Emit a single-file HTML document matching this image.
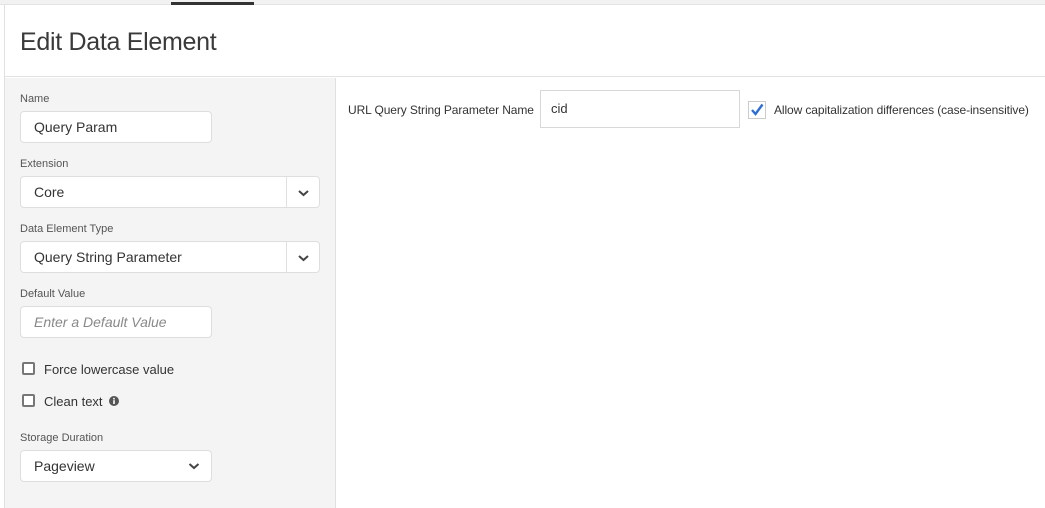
<!DOCTYPE html>
<html><head><meta charset="utf-8"><style>
*{box-sizing:border-box;margin:0;padding:0}
body{width:1045px;height:508px;overflow:hidden;background:#fff;font-family:"Liberation Sans",sans-serif;color:#333;position:relative}
.abs{position:absolute}
.top{left:0;top:0;width:1045px;height:5px;background:#f2f2f2;border-bottom:1px solid #e4e4e4}
.tab{left:171px;top:2px;width:83px;height:3px;background:#333}
.lb{left:4px;top:5px;width:1px;height:503px;background:#e0e0e0}
.hdr{left:5px;top:5px;width:1040px;height:72px;border-bottom:1px solid #e2e2e2}
h1{position:absolute;font-weight:normal;font-size:25px;color:#3a3a3a;letter-spacing:-0.3px}
.side{left:5px;top:78px;width:331px;height:430px;background:#f4f4f4;border-right:1px solid #e0e0e0}
.lbl{font-size:11px;color:#555}
.inp{background:#fff;border:1px solid #dedede;border-radius:4px;height:32px;font-size:14px;padding-left:13px;line-height:30px;color:#333}
.inp .btn{position:absolute;right:0;top:0;width:33px;height:30px;border-left:1px solid #e0e0e0}
.cb{width:13px;height:13px;border:2px solid #777;border-radius:2px;background:#fff}
.ct{font-size:13px;color:#333}
</style></head><body>
<div class="abs top"></div><div class="abs tab"></div>
<div class="abs lb"></div>
<div class="abs hdr"><h1 style="left:15px;top:23px">Edit Data Element</h1></div>
<div class="abs side"></div>
<div class="abs lbl" style="left:20px;top:93px">Name</div>
<div class="abs inp" style="left:20px;top:111px;width:192px">Query Param</div>
<div class="abs lbl" style="left:20px;top:158px">Extension</div>
<div class="abs inp" style="left:20px;top:176px;width:300px">Core<div class="btn"><svg width="33" height="30" viewBox="0 0 33 30"><path d="M12 14l4.5 4 4.5-4" fill="none" stroke="#444" stroke-width="2"/></svg></div></div>
<div class="abs lbl" style="left:20px;top:223px">Data Element Type</div>
<div class="abs inp" style="left:20px;top:241px;width:300px">Query String Parameter<div class="btn"><svg width="33" height="30" viewBox="0 0 33 30"><path d="M12 14l4.5 4 4.5-4" fill="none" stroke="#444" stroke-width="2"/></svg></div></div>
<div class="abs lbl" style="left:20px;top:288px">Default Value</div>
<div class="abs inp" style="left:20px;top:306px;width:192px;color:#888;font-style:italic">Enter a Default Value</div>
<div class="abs cb" style="left:22px;top:362px"></div>
<div class="abs ct" style="left:44px;top:362px">Force lowercase value</div>
<div class="abs cb" style="left:22px;top:394px"></div>
<div class="abs ct" style="left:44px;top:394px">Clean text</div>
<svg class="abs" style="left:109px;top:396px" width="10" height="10" viewBox="0 0 10 10"><circle cx="5" cy="5" r="5" fill="#555"/><rect x="4.2" y="4.2" width="1.6" height="3.8" fill="#fff"/><circle cx="5" cy="2.7" r="0.9" fill="#fff"/></svg>
<div class="abs lbl" style="left:20px;top:432px">Storage Duration</div>
<div class="abs inp" style="left:20px;top:450px;width:192px">Pageview<svg class="abs" style="right:10px;top:10px" width="14" height="10" viewBox="0 0 14 10"><path d="M2.5 3l4.5 4 4.5-4" fill="none" stroke="#444" stroke-width="2"/></svg></div>
<div class="abs ct" style="left:348px;top:103px;font-size:12px;letter-spacing:-0.1px">URL Query String Parameter Name</div>
<div class="abs" style="left:540px;top:90px;width:200px;height:38px;border:1px solid #d8d8d8;font-size:13px;padding-left:10px;line-height:36px">cid</div>
<div class="abs" style="left:748px;top:101px;width:18px;height:18px;border:1px solid #ccc;background:#fff"><svg width="16" height="16" viewBox="0 0 16 16"><path d="M3 8l3.5 4L13.5 2.5" fill="none" stroke="#2d6ed4" stroke-width="2.4"/></svg></div>
<div class="abs ct" style="left:774px;top:103px;font-size:12px;letter-spacing:-0.1px">Allow capitalization differences (case-insensitive)</div>
</body></html>
